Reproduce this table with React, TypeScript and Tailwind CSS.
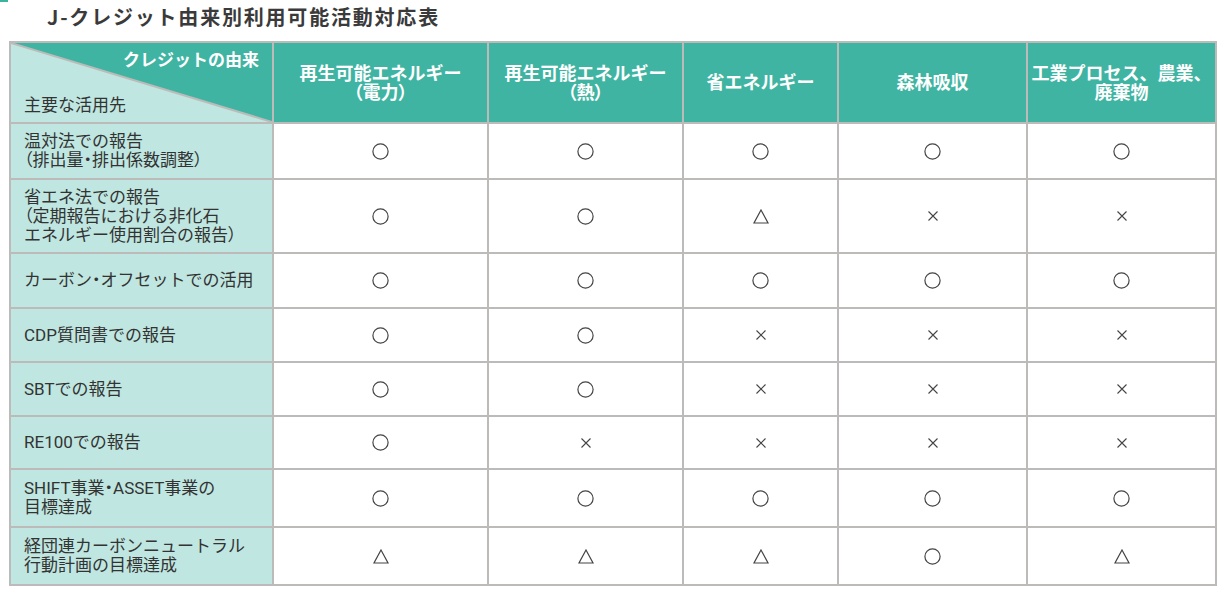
import React from 'react';

type Mark = '○' | '△' | '×';

interface Row {
  label: string[];
  marks: Mark[];
  h: string;
}

const headers: string[][] = [
  ['再生可能エネルギー', '（電力）'],
  ['再生可能エネルギー', '（熱）'],
  ['省エネルギー'],
  ['森林吸収'],
  ['工業プロセス、農業、', '廃棄物'],
];

const rows: Row[] = [
  { label: ['温対法での報告', '（排出量・排出係数調整）'], marks: ['○', '○', '○', '○', '○'], h: 'h-[56px]' },
  {
    label: ['省エネ法での報告', '（定期報告における非化石', 'エネルギー使用割合の報告）'],
    marks: ['○', '○', '△', '×', '×'],
    h: 'h-[74px]',
  },
  { label: ['カーボン・オフセットでの活用'], marks: ['○', '○', '○', '○', '○'], h: 'h-[55px]' },
  { label: ['CDP質問書での報告'], marks: ['○', '○', '×', '×', '×'], h: 'h-[54px]' },
  { label: ['SBTでの報告'], marks: ['○', '○', '×', '×', '×'], h: 'h-[54px]' },
  { label: ['RE100での報告'], marks: ['○', '×', '×', '×', '×'], h: 'h-[53px]' },
  { label: ['SHIFT事業・ASSET事業の', '目標達成'], marks: ['○', '○', '○', '○', '○'], h: 'h-[58px]' },
  { label: ['経団連カーボンニュートラル', '行動計画の目標達成'], marks: ['△', '△', '△', '○', '△'], h: 'h-[58px]' },
];

const colWidths = ['w-[215px]', 'w-[195px]', 'w-[155px]', 'w-[189px]', 'w-[189px]'];

// 括弧と中黒だけ詰める
const Tight: React.FC<{ text: string }> = ({ text }) => (
  <>
    {text.split(/([（）・])/).map((part, k) =>
      /^[（）・]$/.test(part) ? (
        <span key={k} className="[font-feature-settings:'palt']">
          {part}
        </span>
      ) : (
        part
      ),
    )}
  </>
);

// 改行付きのテキストを1つの要素にまとめる
const Lines: React.FC<{ lines: string[] }> = ({ lines }) => (
  <>
    {lines.map((line, j) => (
      <React.Fragment key={j}>
        {j > 0 && <br />}
        <Tight text={line} />
      </React.Fragment>
    ))}
  </>
);

const MarkCell: React.FC<{ mark: Mark }> = ({ mark }) => {
  if (mark === '×') {
    return (
      <svg width="12" height="12" viewBox="0 0 12 12" className="block mx-auto">
        <path d="M1.5 1.5 L10.5 10.5 M10.5 1.5 L1.5 10.5" stroke="#444" strokeWidth="1.1" />
      </svg>
    );
  }
  if (mark === '△') {
    return (
      <svg width="16" height="15" viewBox="0 0 16 15" className="block mx-auto">
        <path d="M8 1 L15 14 L1 14 Z" fill="none" stroke="#444" strokeWidth="1.2" />
      </svg>
    );
  }
  return (
    <svg width="17" height="17" viewBox="0 0 17 17" className="block mx-auto">
      <circle cx="8.5" cy="8.5" r="7.6" fill="none" stroke="#444" strokeWidth="1.2" />
    </svg>
  );
};

export default function App() {
  return (
    <div className="relative w-[1225px] h-[592px] bg-white font-['Roboto','Noto_Sans_CJK_JP',sans-serif] text-[#333]">
      <div className="absolute left-0 top-0 w-[8px] h-[2px] bg-[#3cb39f]" />
      <h1 className="pl-[47px] pt-[3px] h-[41px] font-['Noto_Sans_CJK_JP',sans-serif] text-[20px] font-bold leading-[28px] tracking-[1.8px] text-[#3a3a3a]">
        J-クレジット由来別利用可能活動対応表
      </h1>

      <table className="ml-[9px] border-collapse border-2 border-[#bdbbb9] table-fixed">
        <thead>
          <tr className="h-[81px]">
            {/* 斜線ヘッダー */}
            <th className="relative w-[263px] p-0 border-2 border-[#bdbbb9] bg-[#bfe6e0]">
              <svg className="absolute inset-0 w-full h-full" viewBox="0 0 100 100" preserveAspectRatio="none">
                <polygon points="0,0 100,0 100,100" fill="#40b4a2" />
                <line x1="0" y1="0" x2="100" y2="100" stroke="#bdbbb9" strokeWidth="2" vectorEffect="non-scaling-stroke" />
              </svg>
              <div className="relative h-[77px] flex flex-col justify-between px-[13px] pt-[5px] pb-[5px]">
                <div className="text-right text-[17px] font-bold text-white leading-[22px]">クレジットの由来</div>
                <div className="text-left text-[17px] font-normal text-[#333] leading-[22px]">主要な活用先</div>
              </div>
            </th>
            {headers.map((h, i) => (
              <th
                key={i}
                className={`${colWidths[i]} p-0 border-2 border-[#bdbbb9] bg-[#40b4a2] text-white text-[18px] font-bold leading-[19px] text-center align-middle`}
              >
                <Lines lines={h} />
              </th>
            ))}
          </tr>
        </thead>
        <tbody>
          {rows.map((row, i) => (
            <tr key={i} className={row.h}>
              <td className="p-0 pl-[13px] border-2 border-[#bdbbb9] bg-[#bfe6e0] text-[17px] leading-[19px] text-[#333] align-middle">
                <Lines lines={row.label} />
              </td>
              {row.marks.map((m, j) => (
                <td key={j} className="p-0 border-2 border-[#bdbbb9] bg-white text-center align-middle">
                  <MarkCell mark={m} />
                </td>
              ))}
            </tr>
          ))}
        </tbody>
      </table>
    </div>
  );
}
